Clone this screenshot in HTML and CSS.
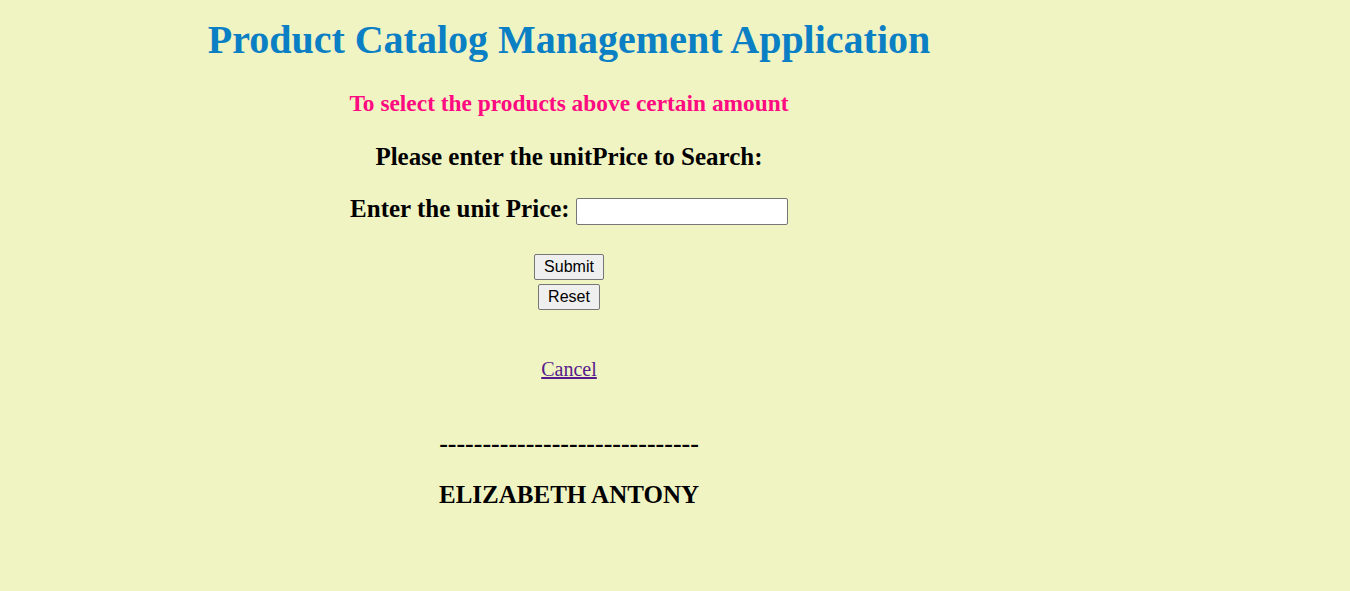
FILE: index.html
```html
<!DOCTYPE html>
<html>
<head>
<meta charset="utf-8">
<title>Product Catalog Management Application</title>
<link rel="stylesheet" href="styles.css">
</head>
<body>
<div class="page">
  <h1 class="title">Product Catalog Management Application</h1>
  <h3 class="subtitle">To select the products above certain amount</h3>
  <form class="search-form">
    <h3 class="prompt">Please enter the unitPrice to Search:</h3>
    <h2 class="field"><label for="unitPrice">Enter the unit Price:</label> <input id="unitPrice" type="text" class="price-input"></h2>
    <div class="actions">
      <button type="submit" class="btn">Submit</button>
      <button type="reset" class="btn">Reset</button>
    </div>
  </form>
  <div class="cancel-row"><a href="#" class="cancel">Cancel</a></div>
  <p class="divider">------------------------------</p>
  <p class="author">ELIZABETH ANTONY</p>
</div>
</body>
</html>
```
FILE: styles.css
```css
html, body {
  background: #f0f4c3;
}
body {
  margin: 8px;
  font-family: "Liberation Serif", "Times New Roman", serif;
  color: #000;
}
.page {
  width: 1122px;
  text-align: center;
}
.title {
  font-size: 40px;
  font-weight: bold;
  color: #0a7fc4;
  margin: 8px 0 0;
}
.subtitle {
  font-size: 23.4px;
  color: #ff0a80;
  margin: 27px 0 0;
}
.search-form {
  margin: 0;
}
.prompt {
  font-size: 25px;
  margin: 26px 0 0;
}
.field {
  font-size: 25px;
  margin: 24px 0 0;
}
.price-input {
  width: 212px;
  height: 27px;
  box-sizing: border-box;
  border: 1px solid #767676;
  border-radius: 2px;
  background: #fff;
  vertical-align: 1px;
  padding: 1px 2px;
}
.actions {
  margin-top: 29px;
  display: flex;
  flex-direction: column;
  align-items: center;
  gap: 4px;
}
.btn {
  font-family: Arial, "Liberation Sans", sans-serif;
  font-size: 16px;
  height: 26px;
  padding: 1px 9px;
  border: 1px solid #767676;
  border-radius: 2px;
  background: #efefef;
  color: #000;
}
.cancel-row {
  margin-top: 48px;
  font-size: 20px;
}
.cancel {
  color: #551a8b;
}
.divider, .author {
  font-weight: bold;
}
.divider {
  font-size: 26px;
  margin: 48px 0 0;
}
.author {
  font-size: 25px;
  margin: 22px 0 0;
}
```
